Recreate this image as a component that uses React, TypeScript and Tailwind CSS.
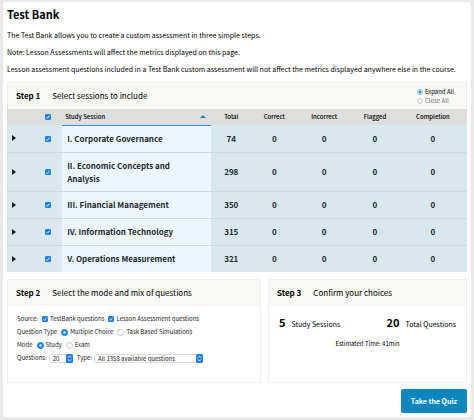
import { useState } from "react";
import type { ReactNode } from "react";

interface Session {
  id: number;
  name: string;
  total: number;
}

const SESSIONS: Session[] = [
  { id: 1, name: "I. Corporate Governance", total: 74 },
  { id: 2, name: "II. Economic Concepts and Analysis", total: 298 },
  { id: 3, name: "III. Financial Management", total: 350 },
  { id: 4, name: "IV. Information Technology", total: 315 },
  { id: 5, name: "V. Operations Measurement", total: 321 },
];

function Tick({
  checked,
  label,
  onChange,
}: {
  checked: boolean;
  label?: string;
  onChange: (v: boolean) => void;
}) {
  return (
    <span className="inline-grid w-[6px] h-[6px] align-middle">
      <input
        type="checkbox"
        aria-label={label}
        checked={checked}
        onChange={(e) => onChange(e.target.checked)}
        className="[grid-area:1/1] appearance-none w-[6px] h-[6px] rounded-[1px] border border-gray-400 bg-white checked:border-[#1a80ee] checked:bg-[#1a80ee]"
      />
      {checked && (
        <svg
          viewBox="0 0 12 12"
          className="[grid-area:1/1] w-[6px] h-[6px] pointer-events-none"
          fill="none"
          stroke="#fff"
          strokeWidth="1.6"
        >
          <path d="M2.8 6.4 5 8.8 9.2 3" />
        </svg>
      )}
    </span>
  );
}

function Radio({
  name,
  checked,
  onChange,
  children,
}: {
  name: string;
  checked: boolean;
  onChange: () => void;
  children: ReactNode;
}) {
  return (
    <label className="flex items-center gap-[2px]">
      <span className="grid place-items-center w-[7px] h-[7px]">
        <input
          type="radio"
          name={name}
          checked={checked}
          onChange={onChange}
          className="[grid-area:1/1] appearance-none w-[7px] h-[7px] rounded-full border border-[#c4c4c4] bg-white checked:border-[#1180f0] checked:bg-[#1180f0]"
        />
        {checked && (
          <svg viewBox="0 0 7 7" className="[grid-area:1/1] w-[7px] h-[7px] pointer-events-none">
            <circle cx="3.5" cy="3.5" r="1.2" fill="#fff" />
          </svg>
        )}
      </span>
      {children}
    </label>
  );
}

function ExpandOption({
  checked,
  onChange,
  children,
}: {
  checked: boolean;
  onChange: () => void;
  children: ReactNode;
}) {
  return (
    <label className={`flex items-center gap-[2px] ${checked ? "text-black" : "text-[#777]"}`}>
      <span className="grid w-[6px] h-[6px]">
        <input
          type="radio"
          name="expand"
          checked={checked}
          onChange={onChange}
          className="[grid-area:1/1] appearance-none w-[6px] h-[6px] rounded-full border border-[#d0d0d0] bg-[#f1f2ef] checked:border-[#8ccbe0] checked:bg-[#d9eef5]"
        />
        {checked && (
          <svg viewBox="0 0 6 6" className="[grid-area:1/1] w-[6px] h-[6px] pointer-events-none">
            <circle cx="3" cy="3" r="1.4" fill="#2b9cc4" />
          </svg>
        )}
      </span>
      {children}
    </label>
  );
}

function Select({ id, options, width }: { id: string; options: string[]; width: string }) {
  return (
    <span className={`grid ${width} h-[9px]`}>
      <select
        id={id}
        className="[grid-area:1/1] appearance-none w-full h-[9px] pl-[3px] rounded-[2px] border border-[#dcdcdc] bg-white text-[6px] leading-[7px] text-[#222]"
      >
        {options.map((o) => (
          <option key={o}>{o}</option>
        ))}
      </select>
      <svg
        viewBox="0 0 14 18"
        className="[grid-area:1/1] justify-self-end w-[7px] h-[9px] pointer-events-none"
      >
        <rect width="14" height="18" rx="3" fill="#1b7ef0" />
        <path
          d="M4 7.2 7 4 10 7.2M4 10.8 7 14 10 10.8"
          fill="none"
          stroke="#fff"
          strokeWidth="1.8"
        />
      </svg>
    </span>
  );
}

function StepHeader({
  step,
  title,
  children,
}: {
  step: string;
  title: string;
  children?: ReactNode;
}) {
  return (
    <div className="flex items-center h-[26px] pl-2 pr-[12px] bg-[#f8f9f5]">
      <h2 className="flex items-center gap-[12px] text-[8px] leading-[12px]">
        <span className="font-bold">{step}</span>
        <span>{title}</span>
      </h2>
      {children}
    </div>
  );
}

export default function App() {
  const [selected, setSelected] = useState<number[]>(SESSIONS.map((s) => s.id));
  const [expand, setExpand] = useState(true);
  const [sources, setSources] = useState({ bank: true, lesson: true });
  const [questionType, setQuestionType] = useState("choice");
  const [mode, setMode] = useState("study");

  const toggle = (id: number, on: boolean) =>
    setSelected(on ? [...selected, id] : selected.filter((s) => s !== id));

  return (
    <div className="min-h-screen bg-[#e9e9e9] px-[3px] pt-[2px] pb-[3px] font-['Noto_Sans_CJK_SC','Noto_Sans',sans-serif] text-black">
      <main className="bg-white rounded-[2px] px-1 pt-[5px] pb-1">
        <h1 className="text-[11px] leading-[15px] font-bold">Test Bank</h1>
        <div className="mt-[8px] mb-[8px] space-y-[7px] text-[7px] leading-[10px]">
          <p>The Test Bank allows you to create a custom assessment in three simple steps.</p>
          <p>Note: Lesson Assessments will affect the metrics displayed on this page.</p>
          <p>
            Lesson assessment questions included in a Test Bank custom assessment will not affect
            the metrics displayed anywhere else in the course.
          </p>
        </div>

        {/* Step 1 */}
        <section className="border border-b-0 border-[#efefed]">
          <StepHeader step="Step 1" title="Select sessions to include">
            <div className="ml-auto text-[6px] leading-[9px]">
              <ExpandOption checked={expand} onChange={() => setExpand(true)}>
                Expand All
              </ExpandOption>
              <ExpandOption checked={!expand} onChange={() => setExpand(false)}>
                Close All
              </ExpandOption>
            </div>
          </StepHeader>
        </section>
        <table className="w-full table-fixed border-collapse text-center">
          <colgroup>
            <col className="w-[6%]" />
            <col className="w-[6%]" />
            <col className="w-[32.4%]" />
            <col className="w-[8.7%]" />
            <col className="w-[10%]" />
            <col className="w-[11.7%]" />
            <col className="w-[10.4%]" />
            <col className="w-[14.8%]" />
          </colgroup>
          <thead className="bg-[#dededc] text-[6px] leading-[10px]">
            <tr className="h-[16px]">
              <th />
              <th className="leading-[6px]">
                <Tick
                  label="Select all sessions"
                  checked={selected.length === SESSIONS.length}
                  onChange={(on) => setSelected(on ? SESSIONS.map((s) => s.id) : [])}
                />
              </th>
              <th className="pl-[3px] pr-[5px] border-b border-[#2f94cf] font-medium">
                <span className="flex items-center justify-between">
                  Study Session
                  <svg viewBox="0 0 6 3" className="w-[6px] h-[3px]">
                    <path d="M0 3 3 0 6 3Z" fill="#1c8ab5" />
                  </svg>
                </span>
              </th>
              <th className="font-medium">Total</th>
              <th className="font-medium">Correct</th>
              <th className="font-medium">Incorrect</th>
              <th className="font-medium">Flagged</th>
              <th className="font-medium">Completion</th>
            </tr>
          </thead>
          <tbody className="bg-[#d8e8ed] text-[8px] leading-[13px] font-bold text-[#1b2a33]">
            {SESSIONS.map((s) => (
              <tr key={s.id} className="h-[27px] border-b border-[#cbdbe0] last:border-b-0">
                <td className="pl-[5px] text-left">
                  <button aria-label={`Expand ${s.name}`} className="block">
                    <svg viewBox="0 0 4 6" className="w-[4px] h-[6px]">
                      <path d="M0 0 4 3 0 6Z" fill="#111c22" />
                    </svg>
                  </button>
                </td>
                <td className="leading-[6px]">
                  <Tick
                    label={s.name}
                    checked={selected.includes(s.id)}
                    onChange={(on) => toggle(s.id, on)}
                  />
                </td>
                <td className="py-[6px] pl-[5px] pr-[24px] bg-[#edf6fc] text-left">{s.name}</td>
                <td>{s.total}</td>
                <td>0</td>
                <td>0</td>
                <td>0</td>
                <td>0</td>
              </tr>
            ))}
          </tbody>
        </table>

        <div className="mt-[7px] grid grid-cols-[254fr_199fr] gap-[7px]">
          {/* Step 2 */}
          <section className="border border-[#efefed] min-h-[104px]">
            <StepHeader step="Step 2" title="Select the mode and mix of questions" />
            <div className="px-[9px] pt-[8px] space-y-[3px] text-[6px] leading-[10px] text-[#222]">
              <div className="flex items-center gap-[4px]">
                <span>Source:</span>
                <label className="flex items-center gap-[2px]">
                  <Tick
                    checked={sources.bank}
                    onChange={(bank) => setSources({ ...sources, bank })}
                  />
                  TestBank questions
                </label>
                <label className="flex items-center gap-[2px]">
                  <Tick
                    checked={sources.lesson}
                    onChange={(lesson) => setSources({ ...sources, lesson })}
                  />
                  Lesson Assessment questions
                </label>
              </div>
              <div className="flex items-center gap-[4px]">
                <span>Question Type</span>
                <Radio
                  name="type"
                  checked={questionType === "choice"}
                  onChange={() => setQuestionType("choice")}
                >
                  Multiple Choice
                </Radio>
                <Radio
                  name="type"
                  checked={questionType === "task"}
                  onChange={() => setQuestionType("task")}
                >
                  Task Based Simulations
                </Radio>
              </div>
              <div className="flex items-center gap-[4px]">
                <span>Mode</span>
                <Radio name="mode" checked={mode === "study"} onChange={() => setMode("study")}>
                  Study
                </Radio>
                <Radio name="mode" checked={mode === "exam"} onChange={() => setMode("exam")}>
                  Exam
                </Radio>
              </div>
              <div className="flex items-center gap-[4px]">
                <div className="flex items-center gap-[2px]">
                  <label htmlFor="count">Questions:</label>
                  <Select id="count" options={["20", "50", "100"]} width="w-[24px]" />
                </div>
                <div className="flex items-center gap-[2px]">
                  <label htmlFor="pool">Type:</label>
                  <Select id="pool" options={["All 1358 available questions"]} width="w-[109px]" />
                </div>
              </div>
            </div>
          </section>

          {/* Step 3 */}
          <section className="border border-[#efefed] min-h-[104px]">
            <StepHeader step="Step 3" title="Confirm your choices" />
            <div className="flex justify-between px-[10px] pt-[9px] text-[7px] leading-[14px]">
              <p className="flex items-baseline gap-[6px]">
                <b className="text-[11px]">{selected.length}</b>
                Study Sessions
              </p>
              <p className="flex items-baseline gap-[6px]">
                <b className="text-[11px]">20</b>
                Total Questions
              </p>
            </div>
            <p className="mt-[8px] text-center text-[6px] leading-[10px]">Estimated Time: 41min</p>
          </section>
        </div>

        <div className="mt-[6px] flex justify-end">
          <button className="w-[66px] h-[24px] rounded-[2px] bg-[#0b87bf] text-[7px] leading-[12px] font-bold text-white">
            Take the Quiz
          </button>
        </div>
      </main>
    </div>
  );
}
